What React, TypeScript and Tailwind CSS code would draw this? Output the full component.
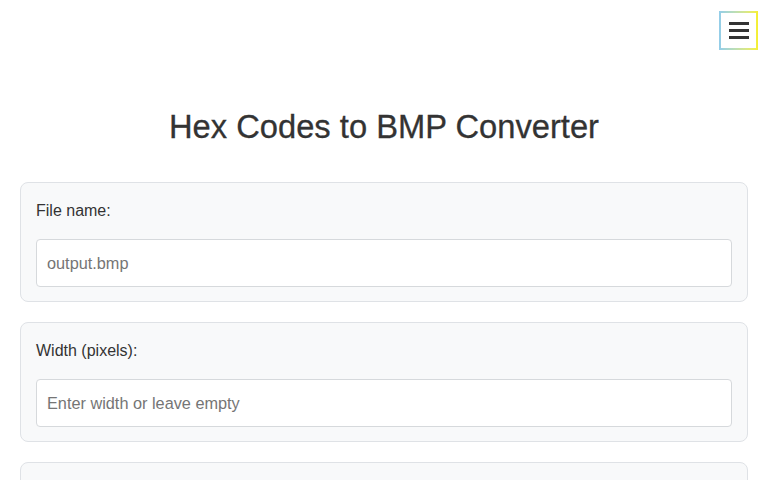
export default function App() {
  return (
    <div className="min-h-screen bg-white text-[#212529]" style={{ fontFamily: '"Liberation Sans", Arial, sans-serif' }}>
      {/* Header */}
      <div className="flex justify-end pt-[11px] pr-[10px]">
        <button className="w-[39px] h-[39px] p-[2px] bg-gradient-to-r from-[#93cdea] to-[#f6f02a]">
          <span className="flex h-full w-full flex-col items-center justify-center gap-[4px] bg-white">
            <span className="block h-[3px] w-[20px] bg-[#333]" />
            <span className="block h-[3px] w-[20px] bg-[#333]" />
            <span className="block h-[3px] w-[20px] bg-[#333]" />
          </span>
        </button>
      </div>

      <h1 className="mt-[57px] mb-[35px] text-center text-[32.7px] leading-[40px] text-[#333] [-webkit-text-stroke:0.3px_#333]">
        Hex Codes to BMP Converter
      </h1>

      <div className="px-5 space-y-5">
        <div className="rounded-lg border border-[#dfe2e6] bg-[#f8f9fa] px-[15px] pt-4 pb-[14px]">
          <label className="block text-base leading-6 text-[#333] mb-4">File name:</label>
          <input
            placeholder="output.bmp"
            className="block w-full h-[48px] rounded border border-[#d6d9dc] bg-white px-[10px] text-[16.3px] text-[#333] placeholder:text-[#757575] outline-none"
          />
        </div>

        <div className="rounded-lg border border-[#dfe2e6] bg-[#f8f9fa] px-[15px] pt-4 pb-[14px]">
          <label className="block text-base leading-6 text-[#333] mb-4">Width (pixels):</label>
          <input
            placeholder="Enter width or leave empty"
            className="block w-full h-[48px] rounded border border-[#d6d9dc] bg-white px-[10px] text-[16.3px] text-[#333] placeholder:text-[#757575] outline-none"
          />
        </div>

        <div className="rounded-lg border border-[#dfe2e6] bg-[#f8f9fa] px-[15px] pt-4 pb-[14px]">
          <label className="block text-base leading-6 text-[#333] mb-4">Height (pixels):</label>
          <input
            placeholder="Enter height or leave empty"
            className="block w-full h-[48px] rounded border border-[#d6d9dc] bg-white px-[10px] text-[16.3px] text-[#333] placeholder:text-[#757575] outline-none"
          />
        </div>
      </div>
    </div>
  );
}
